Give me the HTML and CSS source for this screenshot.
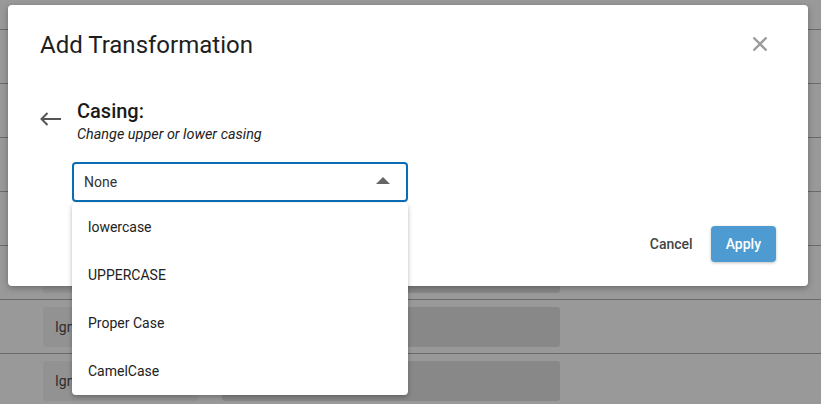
FILE: index.html
```html
<!DOCTYPE html>
<html lang="en">
<head>
<meta charset="utf-8">
<title>Add Transformation</title>
<link rel="stylesheet" href="styles.css">
</head>
<body>
<div class="page">
  <div class="row"></div>
  <div class="row"><div class="cell-left"></div><div class="cell-right"></div></div>
  <div class="row"><div class="cell-left"></div><div class="cell-right"></div></div>
  <div class="row"><div class="cell-left"></div><div class="cell-right"></div></div>
  <div class="row"><div class="cell-left"></div><div class="cell-right"></div></div>
  <div class="row"><div class="cell-left"></div><div class="cell-right"></div></div>
  <div class="row"><div class="cell-left">Ignore</div><div class="cell-right"></div></div>
  <div class="row"><div class="cell-left">Ignore</div><div class="cell-right"></div></div>
</div>

<div class="dialog">
  <div class="dialog-header">
    <h1 class="dialog-title">Add Transformation</h1>
    <button class="close-btn" aria-label="Close">
      <svg width="16" height="16" viewBox="0 0 16 16"><path d="M1.5 1.5 L14.5 14.5 M14.5 1.5 L1.5 14.5" stroke="#9b9b9b" stroke-width="2.4" fill="none"/></svg>
    </button>
  </div>
  <div class="step">
    <svg class="back" width="22" height="14" viewBox="0 0 22 14"><path d="M1.5 7 H21 M7.5 1 L1.5 7 L7.5 13" stroke="#555" stroke-width="2" fill="none"/></svg>
    <div class="step-text">
      <div class="step-title">Casing:</div>
      <div class="step-sub">Change upper or lower casing</div>
    </div>
  </div>
  <div class="select-wrap">
    <div class="select">
      <span>None</span>
      <span class="caret"></span>
    </div>
    <ul class="menu">
      <li>lowercase</li>
      <li>UPPERCASE</li>
      <li>Proper Case</li>
      <li>CamelCase</li>
    </ul>
  </div>
  <div class="actions">
    <button class="btn btn-cancel">Cancel</button>
    <button class="btn btn-apply">Apply</button>
  </div>
</div>
</body>
</html>
```

FILE: styles.css
```css
html, body {
  margin: 0;
  padding: 0;
}
body {
  width: 821px;
  height: 404px;
  overflow: hidden;
  background: #999999;
  font-family: Roboto, "Liberation Sans", sans-serif;
  position: relative;
}
.page {
  margin-top: -24px;
}
.row {
  height: 40px;
  padding: 7px 0 6px 43px;
  border-bottom: 1px solid #6a6a6a;
  display: flex;
  gap: 24px;
}
.cell-left {
  width: 143px;
  padding-left: 12px;
  background: #929292;
  border-radius: 3px;
  font-size: 14px;
  color: #2e2e2e;
  display: flex;
  align-items: center;
}
.cell-right {
  width: 338px;
  background: #888888;
  border-radius: 3px;
}

.dialog {
  position: absolute;
  left: 8px;
  top: 5px;
  width: 800px;
  height: 281px;
  box-sizing: border-box;
  padding-top: 26px;
  background: #fff;
  border-radius: 4px;
  box-shadow: 0 2px 6px rgba(0,0,0,0.3);
}
.dialog-header {
  display: flex;
  justify-content: space-between;
  align-items: center;
  padding: 0 40px 0 32px;
  height: 28px;
}
.dialog-title {
  margin: 0;
  font-size: 24px;
  line-height: 28px;
  font-weight: 400;
  color: #1e1e1e;
}
.close-btn {
  border: 0;
  background: none;
  padding: 0;
  width: 16px;
  height: 16px;
  display: block;
  margin-top: -2px;
}
.close-btn svg { display: block; }

.step {
  display: flex;
  align-items: flex-start;
  margin-top: 41px;
  padding-left: 32px;
}
.back {
  margin-top: 12px;
  display: block;
}
.step-text {
  margin-left: 15px;
}
.step-title {
  font-size: 20px;
  line-height: 22px;
  font-weight: 500;
  color: #1a1a1a;
}
.step-sub {
  margin-top: 4px;
  font-size: 14.4px;
  line-height: 18px;
  font-style: italic;
  color: #222;
}

.select-wrap {
  position: relative;
  margin: 18px 0 0 64px;
  width: 336px;
}
.select {
  box-sizing: border-box;
  height: 40px;
  border: 2px solid #0b6db3;
  border-radius: 4px;
  padding: 0 16px 0 10px;
  display: flex;
  align-items: center;
  justify-content: space-between;
  font-size: 14px;
  color: #333;
}
.caret {
  width: 0;
  height: 0;
  border-left: 7px solid transparent;
  border-right: 7px solid transparent;
  border-bottom: 7px solid #666;
  margin-top: -3px;
}
.menu {
  position: absolute;
  left: 0;
  top: 41px;
  width: 336px;
  margin: 0;
  padding: 0;
  list-style: none;
  background: #fff;
  border-radius: 4px;
  box-shadow: 0 2px 5px rgba(0,0,0,0.28);
  z-index: 2;
}
.menu li {
  height: 48px;
  line-height: 48px;
  padding-left: 16px;
  font-size: 14px;
  color: #222;
}

.actions {
  display: flex;
  justify-content: flex-end;
  margin-top: 24px;
  padding-right: 32px;
  gap: 3px;
}
.btn {
  height: 36px;
  border: 0;
  border-radius: 4px;
  font-family: Roboto, "Liberation Sans", sans-serif;
  font-size: 14px;
  font-weight: 500;
  padding: 0 15px;
  background: none;
}
.btn-cancel {
  color: #444;
  padding: 0 15px 0 16px;
}
.btn-apply {
  background: #4d9bd0;
  color: #fff;
  box-shadow: 0 1px 3px rgba(0,0,0,0.25);
}
```
